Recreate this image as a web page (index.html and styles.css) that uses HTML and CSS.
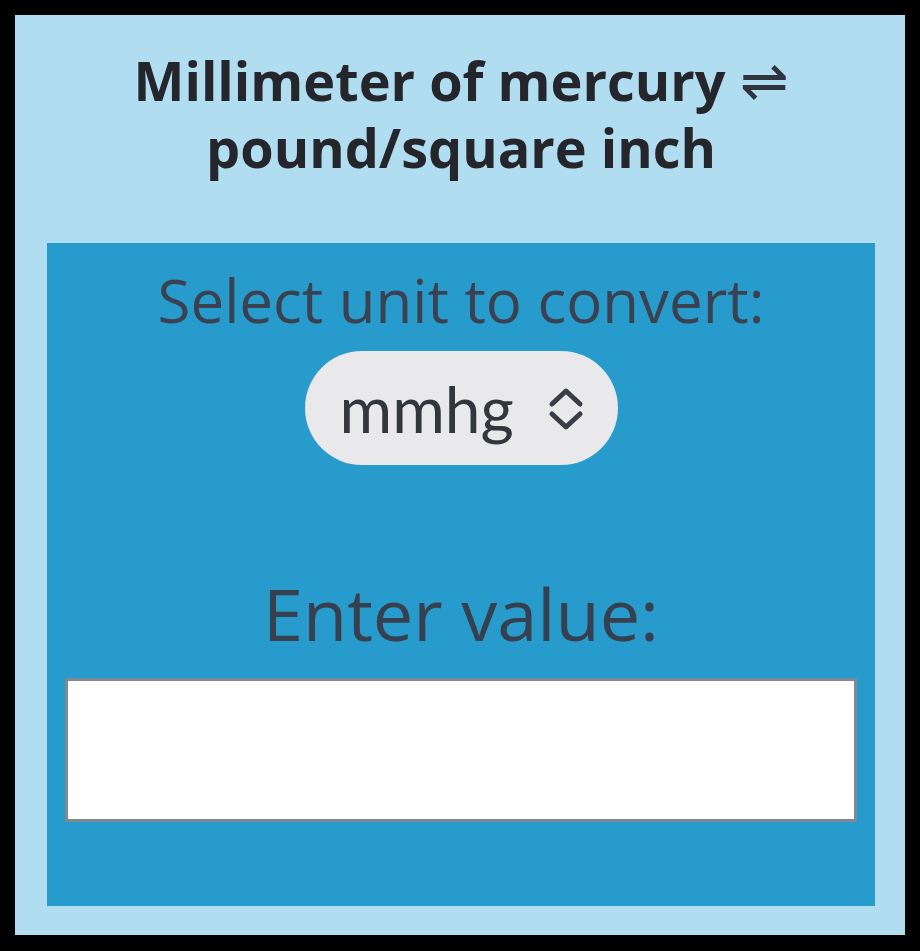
FILE: index.html
```html
<!DOCTYPE html>
<html lang="en">
<head>
  <meta charset="UTF-8">
  <meta name="viewport" content="width=device-width, initial-scale=1.0">
  <title>mmHg to psi</title>
  <link rel="stylesheet" href="styles.css">
</head>
<body>
  <div class="frame">
    <h1 class="title">Millimeter of mercury <span class="swap">&#8652;</span><br>pound/square inch</h1>
    <div class="converter">
      <label class="unit-label" for="unit">Select unit to convert:</label>
      <div class="select-wrap">
        <select id="unit" class="unit-select">
          <option>mmhg</option>
          <option>psi</option>
        </select>
        <svg class="chevrons" viewBox="0 0 40 44" width="40" height="44" aria-hidden="true">
          <path d="M6 17 L20 4 L34 17 M6 27 L20 40 L34 27" fill="none" stroke="#3a3d45" stroke-width="5" stroke-linecap="round" stroke-linejoin="round"/>
        </svg>
      </div>
      <label class="value-label" for="value">Enter value:</label>
      <input type="text" id="value" class="value-input">
    </div>
  </div>
</body>
</html>
```

FILE: styles.css
```css
html, body {
  margin: 0;
  height: 100%;
  background-color: #000;
}

body {
  font-family: "Open Sans", Arial, sans-serif;
}

.frame {
  box-sizing: border-box;
  height: 951px;
  border: solid #000;
  border-width: 15px 15px 16px 15px;
  background-color: #b0ddf0;
  padding: 0 30px 29px 32px;
  display: flex;
  flex-direction: column;
}

.title {
  flex: none;
  margin: 0;
  padding-top: 32px;
  height: 228px;
  box-sizing: border-box;
  text-align: center;
  font-size: 54px;
  line-height: 66px;
  font-weight: 700;
  color: #25262b;
}

.swap {
  font-family: "DejaVu Sans", sans-serif;
  font-weight: 200;
  font-size: 58px;
  color: #2e3440;
}

.converter {
  flex: 1;
  background-color: #279ccc;
  padding: 0 18px;
  display: flex;
  flex-direction: column;
  align-items: center;
}

.unit-label {
  margin-top: 25px;
  font-size: 60px;
  line-height: 64px;
  color: #3a4150;
}

.select-wrap {
  position: relative;
  margin-top: 19px;
}

.unit-select {
  appearance: none;
  -webkit-appearance: none;
  display: block;
  width: 313px;
  height: 114px;
  border: none;
  border-radius: 57px;
  background-color: #e9e9ec;
  padding: 0 0 0 35px;
  font-family: Lato, "Open Sans", sans-serif;
  font-size: 64px;
  color: #34363d;
}

.chevrons {
  position: absolute;
  right: 32px;
  top: 36px;
  pointer-events: none;
}

.value-label {
  margin-top: 108px;
  font-size: 72px;
  line-height: 80px;
  color: #37404f;
}

.value-input {
  align-self: stretch;
  margin-top: 25px;
  height: 144px;
  box-sizing: border-box;
  border: 3px solid #7d8a96;
  background-color: #fff;
}
```
